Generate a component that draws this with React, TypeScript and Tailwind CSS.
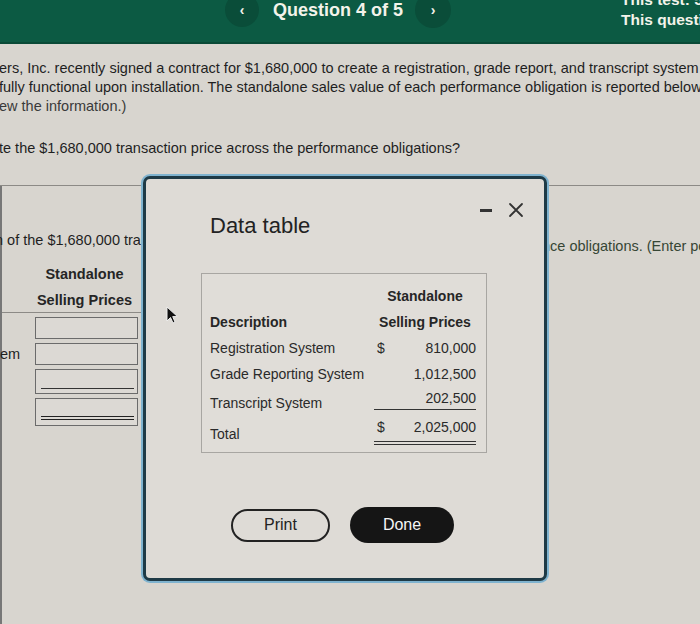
import React from "react";

const font = { fontFamily: '"Liberation Sans", Arial, sans-serif' };

function InputBox({ kind }: { kind?: "single" | "double" }) {
  return (
    <div className="relative w-[103px] h-full border border-[#6b6b6b] bg-[#dcd9d4]">
      {kind === "single" && (
        <div className="absolute left-[5px] right-[3px] bottom-[4px] h-px bg-[#333]" />
      )}
      {kind === "double" && (
        <div className="absolute left-[5px] right-[3px] bottom-[5px] h-[4px] border-y border-[#222]" />
      )}
    </div>
  );
}

export default function App() {
  return (
    <div
      className="relative w-[700px] h-[624px] overflow-hidden bg-[#d8d5cf] text-[#1f1f1f] flex flex-col"
      style={font}
    >
      {/* Header */}
      <div className="h-[44px] shrink-0 bg-[#0c5a43] border-b-2 border-[#0a4a37] flex items-start overflow-hidden">
        <div className="w-[225px] shrink-0" />
        <div className="w-[34px] h-[34px] -mt-[7px] shrink-0 rounded-full bg-[#0a4d39] flex items-center justify-center text-[#f2f2ea] text-[14px] font-bold">
          ‹
        </div>
        <div className="ml-[14px] shrink-0 text-[18px] leading-[20px] font-bold text-[#f3f3ea] whitespace-nowrap">
          Question 4 of 5
        </div>
        <div className="ml-[12px] w-[36px] h-[36px] -mt-[8px] shrink-0 rounded-full bg-[#0a4d39] flex items-center justify-center text-[#f2f2ea] text-[14px] font-bold">
          ›
        </div>
        <div className="ml-[170px] -mt-[10px] shrink-0 text-[15.5px] leading-[20px] font-bold text-[#f3f3ea] whitespace-nowrap">
          <div>This test: 5 of 5 complete</div>
          <div>This question: 1 point</div>
        </div>
      </div>

      {/* Question text */}
      <div className="pt-[15px] -ml-[1px] text-[14.5px] leading-[19px] whitespace-nowrap shrink-0">
        <div>ers, Inc. recently signed a contract for $1,680,000 to create a registration, grade report, and transcript system for</div>
        <div>fully functional upon installation. The standalone sales value of each performance obligation is reported below.</div>
        <div className="text-[#3a3a3a]">ew the information.)</div>
        <div className="mt-[23px]">te the $1,680,000 transaction price across the performance obligations?</div>
      </div>

      {/* Answer area */}
      <div className="mt-[27px] grow border-t border-[#8c8a86] flex">
        <div className="w-[145px] shrink-0 border-l-2 border-[#777]">
          <div className="mt-[45px] -ml-[7px] text-[14.5px] leading-[19px] whitespace-nowrap">
            n of the $1,680,000 transaction
          </div>
          <div className="mt-[11px] border-b border-[#8c8a86] text-center pl-[22px] text-[14.5px] leading-[26px] font-bold text-[#252525]">
            <div>Standalone</div>
            <div className="-mb-[1px]">Selling Prices</div>
          </div>
          <div className="pl-[33px] pt-[4px] flex flex-col gap-[4px]">
            <div className="h-[22px]"><InputBox /></div>
            <div className="relative h-[22px]">
              <span className="absolute -left-[35px] top-[2px] text-[14.5px] leading-[18px]">em</span>
              <InputBox />
            </div>
            <div className="h-[25px]"><InputBox kind="single" /></div>
            <div className="h-[28px]"><InputBox kind="double" /></div>
          </div>
        </div>
        <div className="ml-[400px] shrink-0 mt-[51px] text-[14.5px] leading-[19px] whitespace-nowrap text-[#364635]">
          <span className="-ml-[3px]">nce obligations. (Enter percentages</span>
        </div>
      </div>

      {/* Modal */}
      <div className="absolute left-[143px] top-[176px] w-[404px] h-[405px] rounded-[7px] border-[3px] border-[#1e3a46] bg-[#dedbd6] shadow-[0_0_0_2px_#7fb3cf] flex flex-col text-[#2a2a2a]">
        <div className="flex items-start">
          <div className="ml-[64px] mt-[33px] text-[22px] leading-[28px] text-[#222]">Data table</div>
          <div className="ml-auto mr-[20px] mt-[23px] flex items-center gap-[16px]">
            <div className="w-[12px] h-[3px] bg-[#333]" />
            <svg width="16" height="16" viewBox="0 0 16 16">
              <path d="M2 2 L14 14 M14 2 L2 14" stroke="#333" strokeWidth="1.8" strokeLinecap="round" />
            </svg>
          </div>
        </div>

        <div className="ml-[55px] mt-[33px] w-[286px] h-[180px] border border-[#a8a6a2] bg-[#e0ddd8] pl-[8px] pt-[9px] text-[14px] leading-[18px]">
          <div className="flex h-[26px] items-center">
            <div className="w-[164px]" />
            <div className="w-[102px] text-center font-bold text-[#262626]">Standalone</div>
          </div>
          <div className="flex h-[26px] items-center">
            <div className="w-[164px] font-bold text-[#262626]">Description</div>
            <div className="w-[102px] text-center font-bold text-[#262626]">Selling Prices</div>
          </div>
          <div className="flex h-[26px] items-center">
            <div className="w-[164px]">Registration System</div>
            <div className="w-[102px] flex justify-between pl-[3px]">
              <span>$</span>
              <span>810,000</span>
            </div>
          </div>
          <div className="flex h-[26px] items-center">
            <div className="w-[164px]">Grade Reporting System</div>
            <div className="w-[102px] text-right">1,012,500</div>
          </div>
          <div className="flex h-[23px] items-start">
            <div className="w-[164px] mt-[7px]">Transcript System</div>
            <div className="w-[102px] h-[23px] border-b border-[#333] text-right pt-[2px]">202,500</div>
          </div>
          <div className="flex items-start">
            <div className="w-[164px] mt-[15px]">Total</div>
            <div className="w-[102px] pt-[8px] pb-[5px] border-b-4 border-double border-[#333] flex justify-between pl-[3px]">
              <span>$</span>
              <span>2,025,000</span>
            </div>
          </div>
        </div>

        <div className="mt-[54px] ml-[85px] flex items-center gap-[20px]">
          <div className="w-[99px] h-[33px] rounded-full border-2 border-[#222] flex items-center justify-center text-[16px] text-[#222]">
            Print
          </div>
          <div className="w-[104px] h-[36px] rounded-full bg-[#151515] flex items-center justify-center text-[16px] text-[#f5f5f5]">
            Done
          </div>
        </div>
      </div>

      {/* Cursor */}
      <svg className="absolute left-[166px] top-[306px]" width="13" height="19" viewBox="0 0 13 19">
        <path d="M1 1 L1 15 L4.5 11.5 L7 17 L9 16 L6.7 10.6 L11.5 10.6 Z" fill="#111" stroke="#eee" strokeWidth="1" />
      </svg>
    </div>
  );
}
